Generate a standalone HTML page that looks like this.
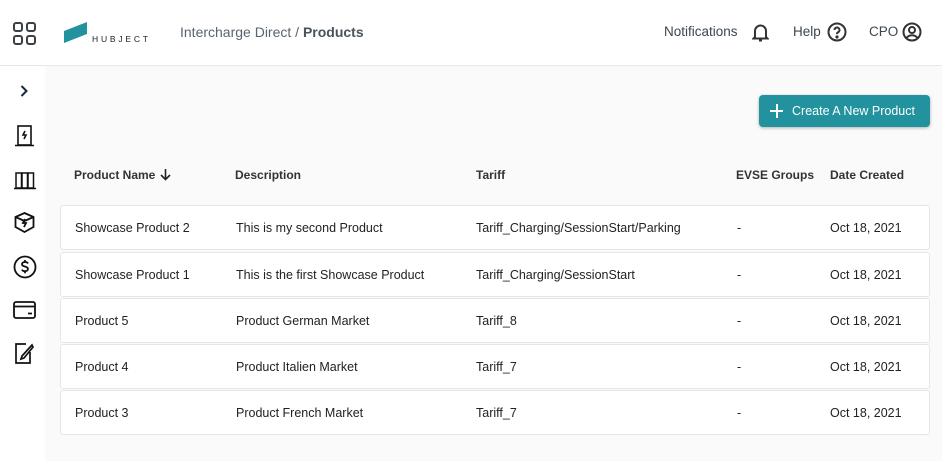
<!DOCTYPE html>
<html><head><style>
*{box-sizing:border-box;margin:0;padding:0}
body{width:942px;height:461px;overflow:hidden;background:#fff;font-family:"Liberation Sans",Arial,sans-serif;color:#222;position:relative}
.top{position:absolute;left:0;top:0;width:942px;height:66px;border-bottom:1px solid #e8e8e8;background:#fff}
.side{position:absolute;left:0;top:66px;width:45px;height:395px;background:#fff}
.main{position:absolute;left:45px;top:66px;width:897px;height:395px;background:#fafafa}
.crumb{position:absolute;left:180px;top:24px;font-size:14px;color:#5a6470}
.crumb b{font-weight:bold;color:#4a525a}
.r{position:absolute;top:24px;font-size:13.5px;color:#3d4650}
.btn{position:absolute;left:759px;top:95px;width:171px;height:32px;background:#21929e;border-radius:4px;box-shadow:0 1px 3px rgba(0,0,0,.3);color:#fff;font-size:12.5px;line-height:32px;padding-left:33px}
.btn:before{content:"";position:absolute;left:11px;top:15px;width:13px;height:2px;background:#fff}
.btn:after{content:"";position:absolute;left:17px;top:9px;width:2px;height:14px;background:#fff}
.h{position:absolute;top:168px;font-size:12px;font-weight:bold;color:#333}
.card{position:absolute;left:60px;width:870px;height:45px;background:#fff;border:1px solid #e6e6e6;border-radius:3px;font-size:12.5px;color:#222}
.card span{position:absolute;top:15px}
</style></head><body>
<div class="top">
<svg style="position:absolute;left:13px;top:22px" width="23" height="23" viewBox="0 0 23 23" fill="none" stroke="#3a4248" stroke-width="2"><rect x="1" y="1" width="8" height="8" rx="2"/><rect x="14" y="1" width="8" height="8" rx="2"/><rect x="1" y="14" width="8" height="8" rx="2"/><rect x="14" y="14" width="8" height="8" rx="2"/></svg>
<svg style="position:absolute;left:64px;top:22px" width="24" height="21"><polygon points="0,9 23,0 23,12 0,21" fill="#21929e"/></svg>
<div style="position:absolute;left:92px;top:34px;font-size:8.5px;letter-spacing:2.8px;color:#222">HUBJECT</div>
<div class="crumb">Intercharge Direct / <b>Products</b></div>
<div class="r" style="left:664px">Notifications</div>
<svg style="position:absolute;left:752px;top:23px" width="17" height="19" viewBox="0 0 17 19" fill="none" stroke="#333" stroke-width="2"><path d="M3 14V8a5.5 5.5 0 0 1 11 0v6l1.5 1.5h-14z"/><path d="M7 17.5h3"/></svg>
<div class="r" style="left:793px">Help</div>
<svg style="position:absolute;left:827px;top:22px" width="20" height="20" viewBox="0 0 20 20" fill="none" stroke="#333" stroke-width="2"><circle cx="10" cy="10" r="8.5"/><path d="M7.5 8a2.5 2.5 0 1 1 3.5 2.3c-.8.4-1 1-1 1.8" /><circle cx="10" cy="15" r=".6" fill="#333"/></svg>
<div class="r" style="left:869px">CPO</div>
<svg style="position:absolute;left:902px;top:22px" width="20" height="20" viewBox="0 0 20 20" fill="none" stroke="#333" stroke-width="2"><circle cx="10" cy="10" r="8.5"/><circle cx="10" cy="8" r="3"/><path d="M4.5 16c1.5-2 3.5-2.7 5.5-2.7s4 .7 5.5 2.7"/></svg>
</div>
<div class="side">
<svg style="position:absolute;left:20px;top:19px" width="8" height="12" viewBox="0 0 8 12" fill="none" stroke="#1a2a3a" stroke-width="2"><path d="M1.5 1l5 5-5 5"/></svg>
<svg style="position:absolute;left:15px;top:59px" width="20" height="22" viewBox="0 0 20 22" fill="none" stroke="#111" stroke-width="1.6"><rect x="3" y="1" width="13" height="19"/><path d="M0 20.5h19"/><path d="M10 6l-2 4h3l-2 4" /></svg>
<svg style="position:absolute;left:14px;top:106px" width="22" height="18" viewBox="0 0 22 18" fill="none" stroke="#111" stroke-width="1.5"><rect x="2" y="1" width="5.5" height="15"/><rect x="8" y="1" width="5.5" height="15"/><rect x="14" y="1" width="5.5" height="15"/><path d="M0 16.5h22"/></svg>
<svg style="position:absolute;left:13px;top:145px" width="23" height="23" viewBox="0 0 23 23" fill="none" stroke="#111" stroke-width="1.8"><path d="M11.5 2l9 4v10l-9 5-9-5V6z"/><path d="M2.5 6l9 4 9-4"/><path d="M12 8l-2 4h3l-2 4"/></svg>
<svg style="position:absolute;left:13px;top:189px" width="24" height="24" viewBox="0 0 24 24" fill="none" stroke="#111" stroke-width="1.8"><circle cx="12" cy="12" r="10.5"/><path d="M15 8.5c-.5-1-1.6-1.5-3-1.5-1.7 0-3 .8-3 2.2 0 3 6 1.5 6 4.7 0 1.4-1.3 2.3-3 2.3-1.5 0-2.6-.6-3.1-1.6M12 5v2M12 16.2v2"/></svg>
<svg style="position:absolute;left:13px;top:235px" width="24" height="18" viewBox="0 0 24 18" fill="none" stroke="#111" stroke-width="1.8"><rect x="1" y="1" width="21" height="16" rx="2"/><path d="M1 5.5h21M15 12.5h4"/></svg>
<svg style="position:absolute;left:14px;top:276px" width="20" height="23" viewBox="0 0 20 23" fill="none" stroke="#111" stroke-width="1.7"><path d="M12 2H2v19h14V10"/><path d="M18 3L8 14l-1 3 3-1L19 5z"/></svg>
</div>
<div class="main"></div>
<div class="btn">Create A New Product</div>
<div class="h" style="left:74px">Product Name</div>
<svg style="position:absolute;left:160px;top:168px" width="11" height="13" viewBox="0 0 11 13" fill="none" stroke="#222" stroke-width="1.6"><path d="M5.5 1v10M1 7l4.5 4.5L10 7"/></svg>
<div class="h" style="left:235px">Description</div>
<div class="h" style="left:476px">Tariff</div>
<div class="h" style="left:736px">EVSE Groups</div>
<div class="h" style="left:830px">Date Created</div>
<div class="card" style="top:205px"><span style="left:14px">Showcase Product 2</span><span style="left:175px">This is my second Product</span><span style="left:415px">Tariff_Charging/SessionStart/Parking</span><span style="left:676px">-</span><span style="left:769px">Oct 18, 2021</span></div>
<div class="card" style="top:252px"><span style="left:14px">Showcase Product 1</span><span style="left:175px">This is the first Showcase Product</span><span style="left:415px">Tariff_Charging/SessionStart</span><span style="left:676px">-</span><span style="left:769px">Oct 18, 2021</span></div>
<div class="card" style="top:298px"><span style="left:14px">Product 5</span><span style="left:175px">Product German Market</span><span style="left:415px">Tariff_8</span><span style="left:676px">-</span><span style="left:769px">Oct 18, 2021</span></div>
<div class="card" style="top:344px"><span style="left:14px">Product 4</span><span style="left:175px">Product Italien Market</span><span style="left:415px">Tariff_7</span><span style="left:676px">-</span><span style="left:769px">Oct 18, 2021</span></div>
<div class="card" style="top:390px"><span style="left:14px">Product 3</span><span style="left:175px">Product French Market</span><span style="left:415px">Tariff_7</span><span style="left:676px">-</span><span style="left:769px">Oct 18, 2021</span></div>
</body></html>
